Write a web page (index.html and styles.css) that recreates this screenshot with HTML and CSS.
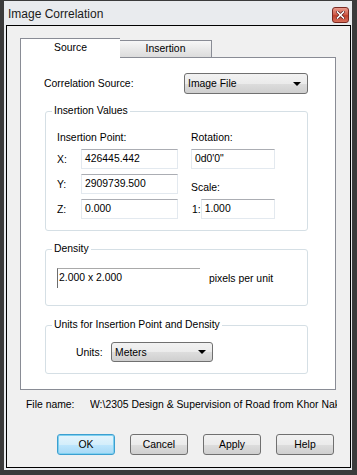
FILE: index.html
```html
<!DOCTYPE html>
<html lang="en">
<head>
    <meta charset="UTF-8">
    <title>Image Correlation</title>
    <link rel="stylesheet" href="styles.css">
</head>
<body>

<div class="window">
    <div class="titlebar">
        <span class="title">Image Correlation</span>
        <button class="close-btn" aria-label="Close">
            <svg width="9" height="8" viewBox="0 0 9 8">
                <path d="M1.5 1 L7.5 7 M7.5 1 L1.5 7" stroke="#5a1a1a" stroke-width="3" stroke-linecap="square"/>
                <path d="M1.5 1 L7.5 7 M7.5 1 L1.5 7" stroke="#ffffff" stroke-width="1.6" stroke-linecap="square"/>
            </svg>
        </button>
    </div>

    <div class="client">
        <div class="tabs">
            <div class="tab active">Source</div>
            <div class="tab">Insertion</div>
        </div>

        <div class="panel">
            <div class="source-row">
                <span class="source-label">Correlation Source:</span>
                <div class="combo source-combo">
                    <span>Image File</span>
                    <span class="arrow"></span>
                </div>
            </div>

            <fieldset class="group">
                <legend>Insertion Values</legend>
                <div class="iv-grid">
                    <span class="head-label">Insertion Point:</span>
                    <span class="head-label right-col">Rotation:</span>

                    <span class="axis">X:</span>
                    <div class="field">426445.442</div>
                    <div class="field right-col">0d0'0"</div>

                    <span class="axis">Y:</span>
                    <div class="field">2909739.500</div>
                    <span class="scale-label right-col">Scale:</span>

                    <span class="axis">Z:</span>
                    <div class="field">0.000</div>
                    <div class="scale-row right-col">
                        <span>1:</span>
                        <div class="field scale-field">1.000</div>
                    </div>
                </div>
            </fieldset>

            <fieldset class="group density">
                <legend>Density</legend>
                <div class="density-row">
                    <div class="density-field">2.000 x 2.000</div>
                    <span>pixels per unit</span>
                </div>
            </fieldset>

            <fieldset class="group units">
                <legend>Units for Insertion Point and Density</legend>
                <div class="units-row">
                    <span>Units:</span>
                    <div class="combo units-combo">
                        <span>Meters</span>
                        <span class="arrow"></span>
                    </div>
                </div>
            </fieldset>
        </div>

        <div class="file-row">
            <span class="file-label">File name:</span>
            <span class="file-path">W:\2305 Design &amp; Supervision of Road from Khor Nakhl</span>
        </div>

        <div class="buttons">
            <button class="btn default">OK</button>
            <button class="btn">Cancel</button>
            <button class="btn">Apply</button>
            <button class="btn">Help</button>
        </div>
    </div>
</div>

</body>
</html>
```

FILE: styles.css
```css
body {
    margin: 0;
    padding: 0;
    font-family: "Liberation Sans", Arial, sans-serif;
    font-size: 10.4px;
    color: #000000;
}
.window {
    width: 357px;
    height: 475px;
    box-sizing: border-box;
    border-style: solid;
    border-color: #3b3b3b;
    border-width: 1px 5px 5px 4px;
    background-color: #e9ebee;
    display: flex;
    flex-direction: column;
}
.titlebar {
    height: 24px;
    flex: none;
    display: flex;
    align-items: flex-start;
    justify-content: space-between;
}
.title {
    font-size: 12px;
    margin: 6px 0 0 4px;
    color: #1a1a1a;
}
.close-btn {
    width: 17px;
    height: 16px;
    margin: 6px 3px 0 0;
    padding: 0;
    border: 1px solid #7a2a22;
    border-radius: 3px;
    background: linear-gradient(#e89a8c, #d2604e 45%, #c0402c 55%, #d8705c);
    display: flex;
    align-items: center;
    justify-content: center;
}
.client {
    flex: 1;
    margin: 0 1px 2px 2px;
    border: 1px solid #000000;
    background-color: #f0f0f0;
    padding: 12px 14px 0 13px;
}

/* tabs */
.tabs {
    display: flex;
    align-items: flex-end;
    height: 19px;
    position: relative;
    z-index: 1;
}
.tab {
    box-sizing: border-box;
    width: 93px;
    height: 17px;
    border: 1px solid #898c95;
    border-bottom: none;
    background: linear-gradient(#f7f7f7, #e9e9e9 50%, #dcdcdc);
    text-align: center;
    line-height: 16px;
    margin-left: -1px;
}
.tab.active {
    width: 100px;
    height: 20px;
    margin-left: 0;
    margin-bottom: -1px;
    background: #ffffff;
    line-height: 17px;
    border-right: none;
    position: relative;
}
.panel {
    box-sizing: border-box;
    width: 316px;
    border: 1px solid #898c95;
    background-color: #ffffff;
    padding: 15px 0 15px 23px;
}

.source-row {
    display: flex;
    align-items: center;
    height: 21px;
}
.source-label {
    width: 140px;
}

/* combo boxes */
.combo {
    box-sizing: border-box;
    height: 21px;
    border: 1px solid #707070;
    border-radius: 3px;
    background: linear-gradient(#f2f2f2, #ebebeb 50%, #dddddd 51%, #cfcfcf);
    display: flex;
    align-items: center;
    justify-content: space-between;
    padding: 0 6px 0 3px;
}
.source-combo {
    width: 124px;
}
.arrow {
    width: 0;
    height: 0;
    border-left: 4px solid transparent;
    border-right: 4px solid transparent;
    border-top: 4px solid #000000;
}

/* group boxes */
.group {
    box-sizing: border-box;
    width: 263px;
    margin: 11px 0 0 1px;
    padding: 0 0 11px 11px;
    border: 1px solid #d5dfe5;
    border-radius: 3px;
    min-width: 0;
}
.group legend {
    padding: 0 2px;
    margin-left: -5px;
    line-height: 12px;
}
.iv-grid {
    display: grid;
    grid-template-columns: 24px 97px 97px;
    grid-template-rows: 13px 20px 20px 20px;
    column-gap: 0;
    row-gap: 5px;
    margin-top: 14px;
}
.right-col {
    grid-column: 3;
    margin-left: 13px;
}
.head-label {
    grid-column: 1 / 3;
    align-self: start;
    line-height: 12px;
    margin-top: 1px;
}
.head-label.right-col {
    grid-column: 3;
}
.axis {
    align-self: center;
}
.field {
    box-sizing: border-box;
    height: 20px;
    border: 1px solid #e3e9ef;
    border-top-color: #abadb3;
    background-color: #ffffff;
    padding-left: 3px;
    line-height: 18px;
}
.scale-label {
    align-self: end;
    line-height: 12px;
}
.scale-row {
    display: flex;
    align-items: center;
}
.scale-row span {
    width: 9px;
    margin-left: 1px;
}
.scale-field {
    width: 87px;
    margin-left: 0;
}

.density {
    margin-top: 12px;
    padding-bottom: 17px;
}
.density-row {
    display: flex;
    align-items: center;
    margin-top: 13px;
}
.density-field {
    box-sizing: border-box;
    width: 143px;
    height: 20px;
    border-top: 1px solid #a9a9a9;
    border-left: 1px solid #6d6d6d;
    line-height: 18px;
    padding-left: 1px;
    margin-right: 9px;
}

.units {
    margin-top: 13px;
}
.units-row {
    display: flex;
    align-items: center;
    margin-top: 11px;
    padding-left: 19px;
}
.units-row > span {
    width: 35px;
}
.units-combo {
    width: 102px;
    height: 20px;
}

/* bottom */
.file-row {
    display: flex;
    margin-top: 9px;
    padding-left: 6px;
    line-height: 12px;
    white-space: nowrap;
    overflow: hidden;
    width: 311px;
}
.file-label {
    width: 64px;
    flex: none;
}
.file-path {
    overflow: hidden;
}
.buttons {
    display: flex;
    gap: 15px;
    margin: 23px 0 0 37px;
}
.btn {
    box-sizing: border-box;
    width: 58px;
    height: 21px;
    padding: 0;
    font-family: "Liberation Sans", Arial, sans-serif;
    font-size: 10.4px;
    color: #000000;
    border: 1px solid #707070;
    border-radius: 3px;
    background: linear-gradient(#f2f2f2, #ebebeb 50%, #dddddd 51%, #cfcfcf);
}
.btn.default {
    border-color: #3c9fd0;
    background: linear-gradient(#e5f4fc, #d4eefb 50%, #bee6fd 51%, #a7d9f5);
    box-shadow: inset 0 0 0 1px #7fd0f0;
}
```
